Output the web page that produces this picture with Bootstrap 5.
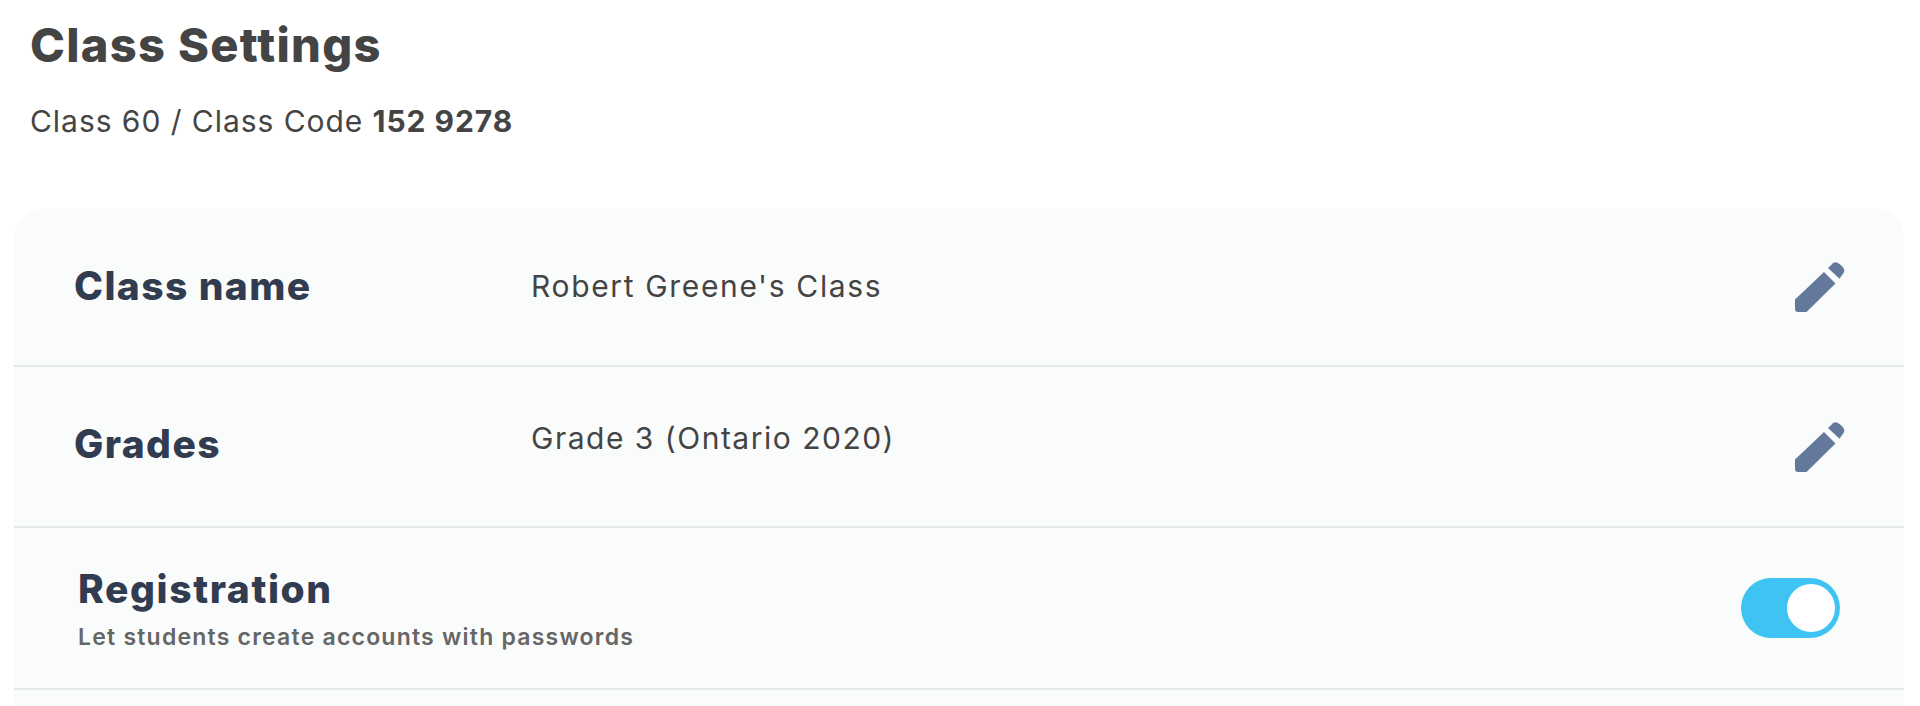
<!DOCTYPE html>
<html lang="en">
<head>
<meta charset="utf-8">
<title>Class Settings</title>
<link href="https://cdn.jsdelivr.net/npm/bootstrap@5.3.0/dist/css/bootstrap.min.css" rel="stylesheet">
<style>
html, body { height: 706px; overflow: hidden; }
body { background: #fff; color: #444; font-family: Inter, "Liberation Sans", sans-serif; }
.page-wrap { padding: 0 16px 0 14px; }
.page-head { padding: 20px 0 0 16px; height: 208px; }
.page-title { font-size: 47px; font-weight: 800; line-height: 50px; margin: 0 0 33px; color: #444; letter-spacing: 1.3px; }
.page-sub { font-size: 30px; line-height: 36px; margin: 0; letter-spacing: .95px; }
.page-sub b { font-weight: 700; }
.settings-panel { background: #fafcfc; border-radius: 30px 30px 0 0; height: 498px; }
.settings-row { height: 159px; border-bottom: 2px solid #e6e9e9; box-sizing: content-box; }
.settings-row-top { height: 157px; }
.settings-row-tall { height: 160px; }
.row-label { width: 517px; padding-left: 60px; font-size: 39px; font-weight: 800; color: #323c50; line-height: 44px; flex: none; letter-spacing: 1.4px; }
.row-value { font-size: 30px; line-height: 36px; color: #444; letter-spacing: 1.65px; }
.name-text { margin-bottom: 2px; }
.grade-label { margin-bottom: 6px; }
.grade-value { margin-bottom: 18px; letter-spacing: 1.5px; }
.row-edit { margin-left: auto; margin-right: 59px; width: 50px; height: 50px; flex: none; color: #64789b; }
.row-edit svg { display: block; width: 50px; height: 50px; }
.reg-text { padding-left: 64px; }
.reg-title { font-size: 39px; font-weight: 800; color: #323c50; line-height: 44px; margin: 0 0 13px; letter-spacing: 1.6px; }
.reg-note { font-size: 23px; font-weight: 600; color: #666; line-height: 26px; margin: 0; letter-spacing: 1.22px; }
.form-switch .reg-toggle, .form-switch .reg-toggle:checked {
  width: 99px; height: 60px; margin: 0 64px 0 0; float: none; border: 0;
  background-color: #3fc3f2; border-radius: 30px;
  background-size: 64px 64px; background-position: right -3px center;
}
</style>
</head>
<body>
<div class="page-wrap">
  <header class="page-head">
    <h1 class="page-title">Class Settings</h1>
    <p class="page-sub">Class 60 / Class Code <b>152 9278</b></p>
  </header>
  <section class="settings-panel overflow-hidden">
    <div class="settings-row settings-row-top d-flex align-items-center">
      <div class="row-label name-text">Class name</div>
      <div class="row-value name-text">Robert Greene's Class</div>
      <div class="row-edit"><svg viewBox="0 0 50 50" fill="currentColor"><path d="M0 37.500 29 10 40.500 21.500 12 49.500Q11.500 50 10.500 50H3Q0 50 0 47Z"/><path d="M33 6 38 1.300Q40 -.3 42.500 .8Q46 2.600 48.500 6Q50 8.500 48.500 11L44.500 16.700Z"/></svg></div>
    </div>
    <div class="settings-row d-flex align-items-center">
      <div class="row-label grade-label">Grades</div>
      <div class="row-value grade-value">Grade 3 (Ontario 2020)</div>
      <div class="row-edit"><svg viewBox="0 0 50 50" fill="currentColor"><path d="M0 37.500 29 10 40.500 21.500 12 49.500Q11.500 50 10.500 50H3Q0 50 0 47Z"/><path d="M33 6 38 1.300Q40 -.3 42.500 .8Q46 2.600 48.500 6Q50 8.500 48.500 11L44.500 16.700Z"/></svg></div>
    </div>
    <div class="settings-row settings-row-tall d-flex align-items-center justify-content-between">
      <div class="reg-text">
        <h2 class="reg-title">Registration</h2>
        <p class="reg-note">Let students create accounts with passwords</p>
      </div>
      <div class="form-check form-switch p-0 m-0 d-flex">
        <input class="form-check-input reg-toggle" type="checkbox" role="switch" checked aria-label="Registration">
      </div>
    </div>
  </section>
</div>
</body>
</html>
